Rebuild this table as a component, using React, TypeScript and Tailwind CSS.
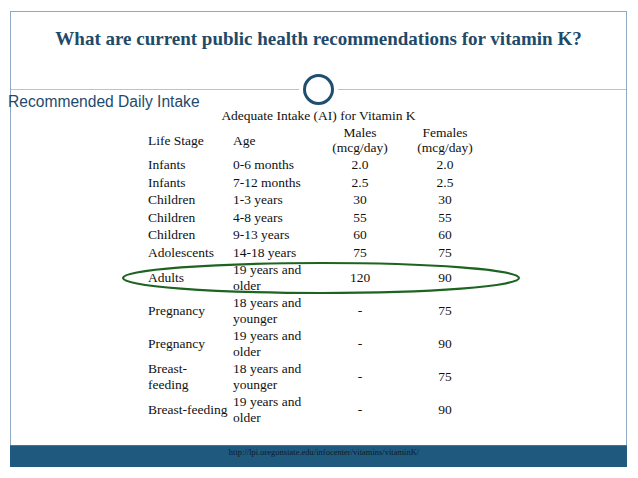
import React from 'react';

type Row = { stage: React.ReactNode; age: React.ReactNode; males: string; females: string; tall?: boolean };

const rows: Row[] = [
  { stage: 'Infants', age: '0-6 months', males: '2.0', females: '2.0' },
  { stage: 'Infants', age: '7-12 months', males: '2.5', females: '2.5' },
  { stage: 'Children', age: '1-3 years', males: '30', females: '30' },
  { stage: 'Children', age: '4-8 years', males: '55', females: '55' },
  { stage: 'Children', age: '9-13 years', males: '60', females: '60' },
  { stage: 'Adolescents', age: '14-18 years', males: '75', females: '75' },
  { stage: 'Adults', age: <>19 years and<br />older</>, males: '120', females: '90', tall: true },
  { stage: 'Pregnancy', age: <>18 years and<br />younger</>, males: '-', females: '75', tall: true },
  { stage: 'Pregnancy', age: <>19 years and<br />older</>, males: '-', females: '90', tall: true },
  { stage: <>Breast-<br />feeding</>, age: <>18 years and<br />younger</>, males: '-', females: '75', tall: true },
  { stage: 'Breast-feeding', age: <>19 years and<br />older</>, males: '-', females: '90', tall: true },
];

const App: React.FC = () => {
  return (
    <div className="relative w-[638px] h-[478px] bg-white overflow-hidden font-['Liberation_Serif',serif]">
      <div className="ml-[10px] mt-[11px] w-[617px] h-[456px] border border-[#8fa9c2] flex flex-col">
        {/* Titel */}
        <div className="h-[54px] flex items-center justify-center text-[19px] font-bold text-[#1f4a68]">
          What are current public health recommendations for vitamin K?
        </div>

        {/* Linie mit Kreis */}
        <div className="mt-[8px] h-[30px] flex items-center">
          <div className="flex-1 h-px bg-[#b3c5d3]" />
          <div className="mx-[4px] w-[31px] h-[31px] rounded-full border-[3.5px] border-[#1f4f6f]" />
          <div className="flex-1 h-px bg-[#b3c5d3]" />
        </div>

        <div className="-mt-[11px] -ml-[3px] h-[18px] leading-[18px] text-[15.6px] text-[#1f4a6b] font-['Liberation_Sans',sans-serif]">
          Recommended Daily Intake
        </div>

        <div className="-mt-[3px] h-[16px] leading-[16px] text-center text-[13.5px] text-[#111111]">
          Adequate Intake (AI) for Vitamin K
        </div>

        {/* Tabelle */}
        <div className="ml-[137px] text-[13.5px] text-[#111111]">
          <div className="grid grid-cols-[85px_87px_80px_90px] h-[32px] leading-[15px] items-center">
            <div>Life Stage</div>
            <div>Age</div>
            <div className="text-center">Males<br />(mcg/day)</div>
            <div className="text-center">Females<br />(mcg/day)</div>
          </div>
          {rows.map((r, i) => (
            <div
              key={i}
              className={
                r.tall
                  ? 'grid grid-cols-[85px_87px_80px_90px] h-[33px] leading-[16px] items-center'
                  : 'grid grid-cols-[85px_87px_80px_90px] h-[17.6px] leading-[17.6px] items-center'
              }
            >
              <div className="whitespace-nowrap">{r.stage}</div>
              <div className="whitespace-nowrap">{r.age}</div>
              <div className="text-center">{r.males}</div>
              <div className="text-center">{r.females}</div>
            </div>
          ))}
        </div>

        {/* Fußleiste */}
        <div className="mt-auto -mx-px -mb-px h-[22px] bg-[#1f5a7e] border-t border-[#3f7799] flex justify-center pt-[1px]">
          <span className="ml-[11px] text-[8.5px] leading-[10px] text-[#0d1b29]">
            http://lpi.oregonstate.edu/infocenter/vitamins/vitaminK/
          </span>
        </div>
      </div>

      {/* Ellipse um Erwachsene */}
      <svg className="absolute left-0 top-0 pointer-events-none" width="638" height="478">
        <ellipse cx="321" cy="278" rx="198" ry="15" fill="none" stroke="#1e6421" strokeWidth="2.2" />
      </svg>
    </div>
  );
};

export default App;
